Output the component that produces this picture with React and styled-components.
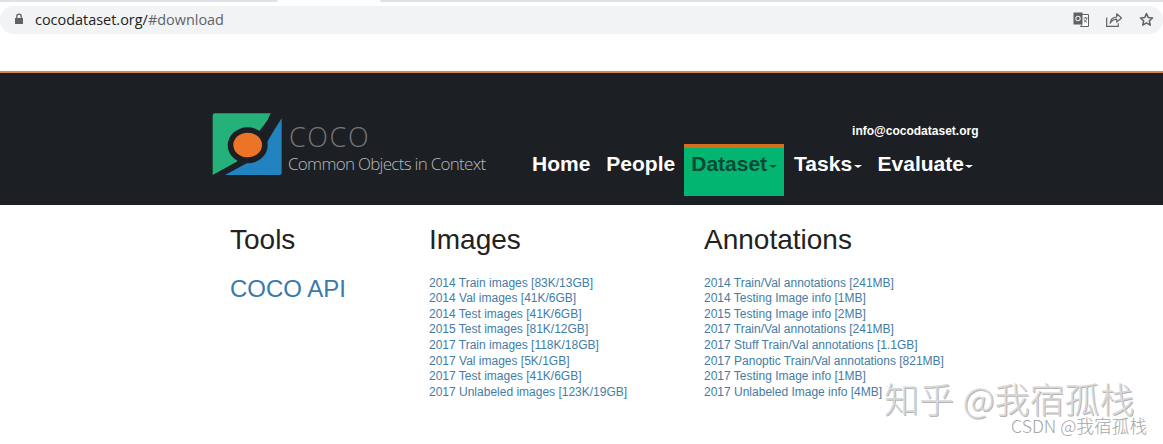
import React from "react";
import styled, { createGlobalStyle } from "styled-components";

const GlobalStyle = createGlobalStyle`
  html, body {
    margin: 0;
    padding: 0;
    background: #ffffff;
    font-family: "Liberation Sans", Arial, sans-serif;
  }
`;

const Page = styled.div`
  position: relative;
  width: 1163px;
  height: 444px;
  overflow: hidden;
  background: #ffffff;
`;

const TabStrip = styled.div`
  display: flex;
  justify-content: space-between;
  height: 6px;
`;

const TabEdge = styled.div`
  width: ${(p) => p.$width}px;
  height: 2px;
  background: #dee1e6;
  border-radius: ${(p) => (p.$right ? "0 0 0 6px" : "0 0 6px 0")};
`;

const UrlBar = styled.div`
  display: flex;
  align-items: center;
  height: 28px;
  padding: 0 9px 2px 14px;
  box-sizing: border-box;
  background: #f1f3f4;
  border-radius: 14px;
`;

const Address = styled.div`
  flex: 1;
  margin-left: 11px;
  font-family: "Open Sans", sans-serif;
  font-size: 14.45px;
  color: #202124;
`;

const AddressHash = styled.span`
  color: #5f6368;
`;

const UrlIcons = styled.div`
  display: flex;
  align-items: center;
  gap: 17px;
`;

const ChromeSpacer = styled.div`
  height: 37px;
`;

const Header = styled.header`
  display: flex;
  height: 132px;
  padding-left: 212px;
  background: #1c1f23;
  border-top: 2px solid #d98a45;
`;

const Brand = styled.div`
  display: flex;
  gap: 5px;
  width: 312px;
  padding-top: 39px;
`;

const BrandText = styled.div`
  display: flex;
  flex-direction: column;
  padding-top: 10px;
  font-family: "Open Sans", sans-serif;
  font-weight: 300;
`;

const BrandName = styled.div`
  font-size: 27px;
  line-height: 30px;
  letter-spacing: 1.6px;
  color: #757678;
`;

const BrandTag = styled.div`
  margin-top: 1px;
  margin-left: -1px;
  font-size: 17px;
  line-height: 22px;
  letter-spacing: -0.72px;
  white-space: nowrap;
  color: #b9babb;
`;

const NavColumn = styled.div`
  display: flex;
  flex-direction: column;
  align-items: flex-start;
`;

const Email = styled.div`
  align-self: flex-end;
  margin: 51px 3px 0 0;
  height: 20px;
  font-size: 12px;
  font-weight: bold;
  line-height: 14px;
  color: #ffffff;
`;

const NavList = styled.nav`
  display: flex;
  align-items: flex-start;
`;

const NavItem = styled.div`
  display: flex;
  align-items: center;
  height: 52px;
  padding: 0 ${(p) => (p.$active ? "7.5px 16px 7px" : "8px 16px")};
  margin: 0 ${(p) => (p.$active ? "2px 0 1px" : "0")};
  box-sizing: border-box;
  font-size: 21px;
  font-weight: bold;
  color: ${(p) => (p.$active ? "#0c4a35" : "#ffffff")};
  background: ${(p) => (p.$active ? "#02b671" : "transparent")};
  border-top: ${(p) => (p.$active ? "4px solid #d4701d" : "4px solid transparent")};
`;

const Caret = styled.span`
  display: inline-block;
  width: 0;
  height: 0;
  margin: 4px 0 0 1.5px;
  border-top: 3px solid currentColor;
  border-left: 4px solid transparent;
  border-right: 4px solid transparent;
`;

const Content = styled.main`
  display: grid;
  grid-template-columns: 199px 275px 1fr;
  padding: 19px 0 0 230px;
`;

const Heading = styled.h2`
  margin: 0 0 19.7px;
  font-size: 28px;
  font-weight: normal;
  line-height: 32px;
  color: #222222;
`;

const ApiLink = styled.a`
  display: block;
  font-size: 24px;
  line-height: 26px;
  color: #3a7aaa;
  text-decoration: none;
`;

const LinkList = styled.ul`
  margin: 0;
  padding: 0;
  list-style: none;
`;

const LinkRow = styled.li`
  font-size: 12px;
  line-height: 15.6px;
  white-space: nowrap;
  color: #437ca6;
`;

const Watermark = styled.div`
  position: absolute;
  left: ${(p) => p.$left}px;
  top: ${(p) => p.$top}px;
  font-family: "Noto Sans CJK SC", sans-serif;
  font-size: ${(p) => p.$size}px;
  font-weight: 300;
  line-height: 1;
  word-spacing: ${(p) => p.$wordGap || 0}px;
  white-space: nowrap;
  color: ${(p) => p.$color};
  text-shadow: ${(p) => p.$shadow || "none"};
`;

const images = [
  "2014 Train images [83K/13GB]",
  "2014 Val images [41K/6GB]",
  "2014 Test images [41K/6GB]",
  "2015 Test images [81K/12GB]",
  "2017 Train images [118K/18GB]",
  "2017 Val images [5K/1GB]",
  "2017 Test images [41K/6GB]",
  "2017 Unlabeled images [123K/19GB]",
];

const annotations = [
  "2014 Train/Val annotations [241MB]",
  "2014 Testing Image info [1MB]",
  "2015 Testing Image info [2MB]",
  "2017 Train/Val annotations [241MB]",
  "2017 Stuff Train/Val annotations [1.1GB]",
  "2017 Panoptic Train/Val annotations [821MB]",
  "2017 Testing Image info [1MB]",
  "2017 Unlabeled Image info [4MB]",
];

function LockIcon() {
  return (
    <svg width="10" height="12" viewBox="0 0 10 12">
      <path d="M1 5h8v6H1z" fill="#5f6368" />
      <path d="M2.8 5V3.4a2.2 2.2 0 0 1 4.4 0V5" fill="none" stroke="#5f6368" strokeWidth="1.3" />
    </svg>
  );
}

function TranslateIcon() {
  return (
    <svg width="16" height="16" viewBox="0 0 16 16">
      <path d="M0.5 1.5h9v12h-9z" fill="#5f6368" />
      <path d="M9 3.5h6.5v12H7.5l1.5-2z" fill="#ffffff" stroke="#5f6368" />
      <circle cx="5" cy="7.5" r="2.2" fill="none" stroke="#e8eaed" strokeWidth="1.1" />
      <path d="M10.5 7h4M12.5 6v1M14 7c-.5 2-1.6 3.5-3 4.3M11 8.5c.6 1.2 1.6 2.2 3 2.8" fill="none" stroke="#5f6368" strokeWidth="0.9" />
    </svg>
  );
}

function ShareIcon() {
  return (
    <svg width="16" height="15" viewBox="0 0 16 15">
      <path d="M0.7 5.5v8.8h11.6v-3" fill="none" stroke="#5f6368" strokeWidth="1.2" />
      <path d="M4.2 11.2c.3-3.5 2.8-6 6.5-6.2V1.8L15.5 6l-4.8 4V7.2c-2.8 0-4.8 1.3-6.5 4z" fill="none" stroke="#5f6368" strokeWidth="1.2" strokeLinejoin="round" />
    </svg>
  );
}

function StarIcon() {
  return (
    <svg width="15" height="15" viewBox="0 0 15 15">
      <path d="M7.5 1.6l1.8 4 4.3.4-3.3 2.9 1 4.3-3.8-2.3-3.8 2.3 1-4.3L1.4 6l4.3-.4z" fill="none" stroke="#5f6368" strokeWidth="1.5" strokeLinejoin="round" />
    </svg>
  );
}

function CocoLogo() {
  return (
    <svg width="72" height="66" viewBox="36 36 216 198">
      <path d="M44 40H212Q205 60 190 78L110 185L38 225V46Q38 40 44 40Z" fill="#25b27a" />
      <path d="M245 55V218Q245 225 238 225H75L140 190Q185 165 205 120Q225 85 245 55Z" fill="#2183c0" />
      <ellipse cx="143" cy="136" rx="60" ry="54" fill="#1c1f23" />
      <path d="M180 100L232 40" stroke="#1c1f23" strokeWidth="12" />
      <ellipse cx="143" cy="135" rx="43" ry="37" fill="#ec7426" />
    </svg>
  );
}

export default function App() {
  return (
    <Page>
      <GlobalStyle />
      <TabStrip>
        <TabEdge $width={278} />
        <TabEdge $width={783} $right />
      </TabStrip>
      <UrlBar>
        <LockIcon />
        <Address>
          cocodataset.org/<AddressHash>#download</AddressHash>
        </Address>
        <UrlIcons>
          <TranslateIcon />
          <ShareIcon />
          <StarIcon />
        </UrlIcons>
      </UrlBar>
      <ChromeSpacer />
      <Header>
        <Brand>
          <CocoLogo />
          <BrandText>
            <BrandName>COCO</BrandName>
            <BrandTag>Common Objects in Context</BrandTag>
          </BrandText>
        </Brand>
        <NavColumn>
          <Email>info@cocodataset.org</Email>
          <NavList>
            <NavItem>Home</NavItem>
            <NavItem>People</NavItem>
            <NavItem $active>
              Dataset
              <Caret />
            </NavItem>
            <NavItem>
              Tasks
              <Caret />
            </NavItem>
            <NavItem>
              Evaluate
              <Caret />
            </NavItem>
          </NavList>
        </NavColumn>
      </Header>
      <Content>
        <div>
          <Heading>Tools</Heading>
          <ApiLink>COCO API</ApiLink>
        </div>
        <div>
          <Heading>Images</Heading>
          <LinkList>
            {images.map((label) => (
              <LinkRow key={label}>{label}</LinkRow>
            ))}
          </LinkList>
        </div>
        <div>
          <Heading>Annotations</Heading>
          <LinkList>
            {annotations.map((label) => (
              <LinkRow key={label}>{label}</LinkRow>
            ))}
          </LinkList>
        </div>
      </Content>
      <Watermark $left={884} $top={380} $size={35} $wordGap={1} $color="#d8d8d8" $shadow="1px 1px 0 #b5b5b5">
        知乎 @我宿孤栈
      </Watermark>
      <Watermark $left={1011} $top={417} $size={17.7} $color="#a6a6a6">
        CSDN @我宿孤栈
      </Watermark>
    </Page>
  );
}
